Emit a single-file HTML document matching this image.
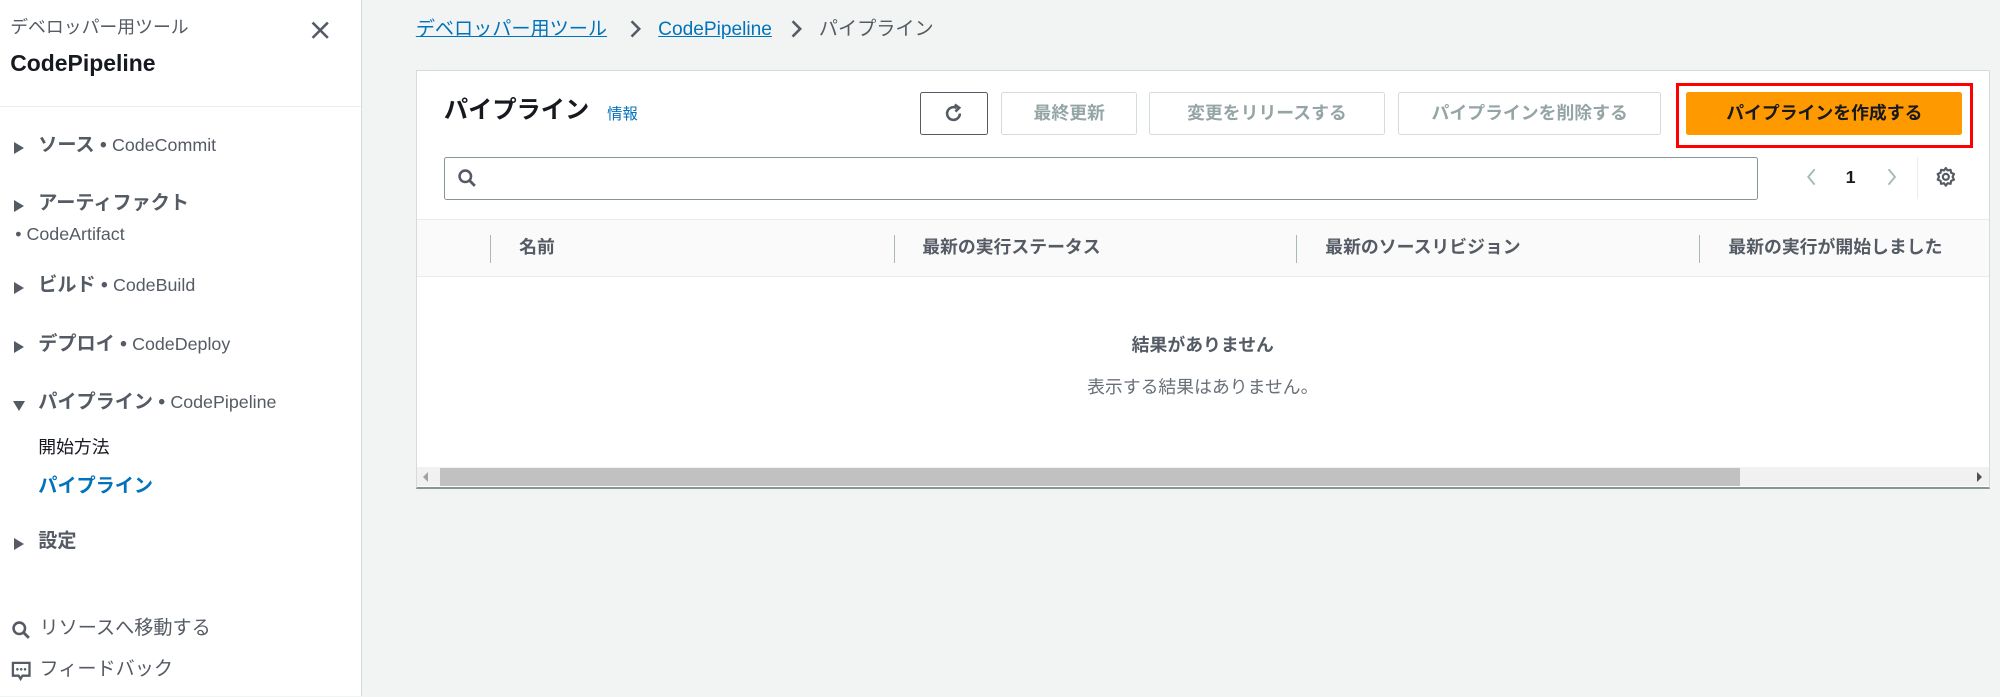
<!DOCTYPE html>
<html><head><meta charset="utf-8"><style>
html,body{margin:0;padding:0;width:2000px;height:697px;overflow:hidden;background:#f2f3f3}
#w{zoom:1.27551;width:1568px;height:546px;position:relative;font-family:"Liberation Sans","Noto Sans CJK JP",sans-serif;color:#16191f}
.a{position:absolute;white-space:nowrap;line-height:20px}
#side{position:absolute;left:0;top:0;width:283px;height:546px;background:#fff;border-right:1px solid #d5dbdb}
.tri{position:absolute;left:11px;width:0;height:0;border-top:5px solid transparent;border-bottom:5px solid transparent;border-left:8px solid #545b64}
.nv{font-size:15px;font-weight:bold;color:#545b64;left:30px}
.nv span{font-weight:normal;font-size:14px}
.bc{font-size:15px;color:#0073bb;text-decoration:underline;top:13px}
.btn{position:absolute;top:72px;height:32px;border:1px solid #d5dbdb;border-radius:2px;background:#fff;color:#95a5a6;font-weight:bold;font-size:14px;text-align:center;line-height:32px}
.th{font-size:14px;font-weight:bold;color:#545b64;top:184px}
.sep{position:absolute;top:184px;width:1px;height:22px;background:#aab7b8}
</style></head><body><div id="w">
<div id="side">
<div class="a" style="left:8px;top:12px;font-size:14px;color:#545b64">デベロッパー用ツール</div>
<div class="a" style="left:8px;top:40px;font-size:18px;font-weight:bold">CodePipeline</div>
<svg class="a" style="left:243px;top:16px" width="16" height="16"><path d="M2 2L14 14M14 2L2 14" stroke="#545b64" stroke-width="2"/></svg>
<div class="a" style="left:0;top:83px;width:283px;height:1px;background:#eaeded"></div>
<div class="tri" style="top:111px"></div><div class="a nv" style="top:104px">ソース • <span>CodeCommit</span></div>
<div class="tri" style="top:157px"></div><div class="a nv" style="top:150px">アーティファクト</div>
<div class="a" style="left:12px;top:174px;font-size:14px;color:#545b64">• CodeArtifact</div>
<div class="tri" style="top:221px"></div><div class="a nv" style="top:214px">ビルド • <span>CodeBuild</span></div>
<div class="tri" style="top:267px"></div><div class="a nv" style="top:260px">デプロイ • <span>CodeDeploy</span></div>
<div class="a" style="left:10px;top:314px;width:0;height:0;border-left:5px solid transparent;border-right:5px solid transparent;border-top:8px solid #545b64"></div>
<div class="a nv" style="top:306px">パイプライン • <span>CodePipeline</span></div>
<div class="a" style="left:30px;top:341px;font-size:14px;color:#16191f">開始方法</div>
<div class="a" style="left:30px;top:372px;font-size:15px;font-weight:bold;color:#0073bb">パイプライン</div>
<div class="tri" style="top:422px"></div><div class="a nv" style="top:415px">設定</div>
<svg class="a" style="left:9px;top:486px" width="16" height="16"><circle cx="6.5" cy="6.5" r="4.5" fill="none" stroke="#545b64" stroke-width="2"/><path d="M10 10L14 14" stroke="#545b64" stroke-width="2.2"/></svg>
<div class="a" style="left:31px;top:483px;font-size:15px;color:#545b64">リソースへ移動する</div>
<svg class="a" style="left:9px;top:518px" width="16" height="17"><path d="M1.5 1.5H14.5V11.5H9L7.5 14L6 11.5H1.5Z" fill="none" stroke="#545b64" stroke-width="1.8"/><circle cx="5" cy="6.5" r="1" fill="#545b64"/><circle cx="8" cy="6.5" r="1" fill="#545b64"/><circle cx="11" cy="6.5" r="1" fill="#545b64"/></svg>
<div class="a" style="left:31px;top:515px;font-size:15px;color:#545b64">フィードバック</div>
</div>
<div class="a bc" style="left:326px">デベロッパー用ツール</div>
<svg class="a" style="left:493px;top:16px" width="10" height="14"><path d="M2 1L8 7L2 13" fill="none" stroke="#545b64" stroke-width="2"/></svg>
<div class="a bc" style="left:516px">CodePipeline</div>
<svg class="a" style="left:619px;top:16px" width="10" height="14"><path d="M2 1L8 7L2 13" fill="none" stroke="#545b64" stroke-width="2"/></svg>
<div class="a" style="left:642px;top:13px;font-size:15px;color:#545b64">パイプライン</div>
<div class="a" style="left:326px;top:55px;width:1234px;height:328px;background:#fff;border:1px solid #d5dbdb;border-bottom:2px solid #879596;box-sizing:border-box"></div>
<div class="a" style="left:348px;top:77px;font-size:19px;font-weight:bold">パイプライン</div>
<div class="a" style="left:476px;top:80px;font-size:12px;color:#0073bb">情報</div>
<div class="btn" style="left:721px;width:52px;border-color:#545b64"><svg style="margin-top:7px" width="18" height="18"><path d="M14 9A5 5 0 1 1 11.5 4.7" fill="none" stroke="#545b64" stroke-width="2"/><path d="M10 2L13.5 4.5L10.5 7.5" fill="none" stroke="#545b64" stroke-width="2"/></svg></div>
<div class="btn" style="left:785px;width:105px">最終更新</div>
<div class="btn" style="left:901px;width:183px">変更をリリースする</div>
<div class="btn" style="left:1096px;width:205px">パイプラインを削除する</div>
<div class="a" style="left:1314px;top:65px;width:233px;height:51px;border:3px solid #f00;box-sizing:border-box"></div>
<div class="btn" style="left:1322px;width:215px;background:#f90;border-color:#f90;color:#16191f">パイプラインを作成する</div>
<div class="a" style="left:348px;top:123px;width:1030px;height:34px;border:1px solid #879596;border-radius:2px;box-sizing:border-box"></div>
<svg class="a" style="left:358px;top:132px" width="16" height="16"><circle cx="6.5" cy="6.5" r="4.5" fill="none" stroke="#545b64" stroke-width="2"/><path d="M10 10L14 14" stroke="#545b64" stroke-width="2.2"/></svg>
<svg class="a" style="left:1417px;top:132px" width="8" height="14"><path d="M6 1L1 7L6 13" fill="none" stroke="#aab7b8" stroke-width="1.5"/></svg>
<div class="a" style="left:1447px;top:129px;font-size:14px;font-weight:bold">1</div>
<svg class="a" style="left:1479px;top:132px" width="8" height="14"><path d="M2 1L7 7L2 13" fill="none" stroke="#aab7b8" stroke-width="1.5"/></svg>
<div class="a" style="left:1503px;top:123px;width:1px;height:33px;background:#eaeded"></div>
<svg class="a" style="left:1517px;top:130px" width="17" height="17" viewBox="0 0 16 16"><path d="M8 1.5L9.3 3.3L11.5 2.8L11.9 5L14 5.9L13 8L14 10.1L11.9 11L11.5 13.2L9.3 12.7L8 14.5L6.7 12.7L4.5 13.2L4.1 11L2 10.1L3 8L2 5.9L4.1 5L4.5 2.8L6.7 3.3Z" fill="none" stroke="#545b64" stroke-width="1.6" stroke-linejoin="round"/><circle cx="8" cy="8" r="2.2" fill="none" stroke="#545b64" stroke-width="1.6"/></svg>
<div class="a" style="left:327px;top:172px;width:1232px;height:44px;background:#fafafa;border-top:1px solid #eaeded;border-bottom:1px solid #eaeded"></div>
<div class="sep" style="left:384px"></div><div class="sep" style="left:701px"></div><div class="sep" style="left:1016px"></div><div class="sep" style="left:1332px"></div>
<div class="a th" style="left:407px">名前</div>
<div class="a th" style="left:723px">最新の実行ステータス</div>
<div class="a th" style="left:1039px">最新のソースリビジョン</div>
<div class="a th" style="left:1355px">最新の実行が開始しました</div>
<div class="a" style="left:327px;top:261px;width:1232px;text-align:center;font-size:14px;font-weight:bold;color:#545b64">結果がありません</div>
<div class="a" style="left:327px;top:294px;width:1232px;text-align:center;font-size:14px;color:#687078">表示する結果はありません。</div>
<div class="a" style="left:327px;top:366px;width:1232px;height:15px;background:#f1f1f1"></div>
<div class="a" style="left:345px;top:367px;width:1019px;height:14px;background:#c1c1c1"></div>
<div class="a" style="left:332px;top:370px;width:0;height:0;border-top:4px solid transparent;border-bottom:4px solid transparent;border-right:4px solid #a3a3a3"></div>
<div class="a" style="left:1550px;top:370px;width:0;height:0;border-top:4px solid transparent;border-bottom:4px solid transparent;border-left:4px solid #505050"></div>
</div></body></html>
